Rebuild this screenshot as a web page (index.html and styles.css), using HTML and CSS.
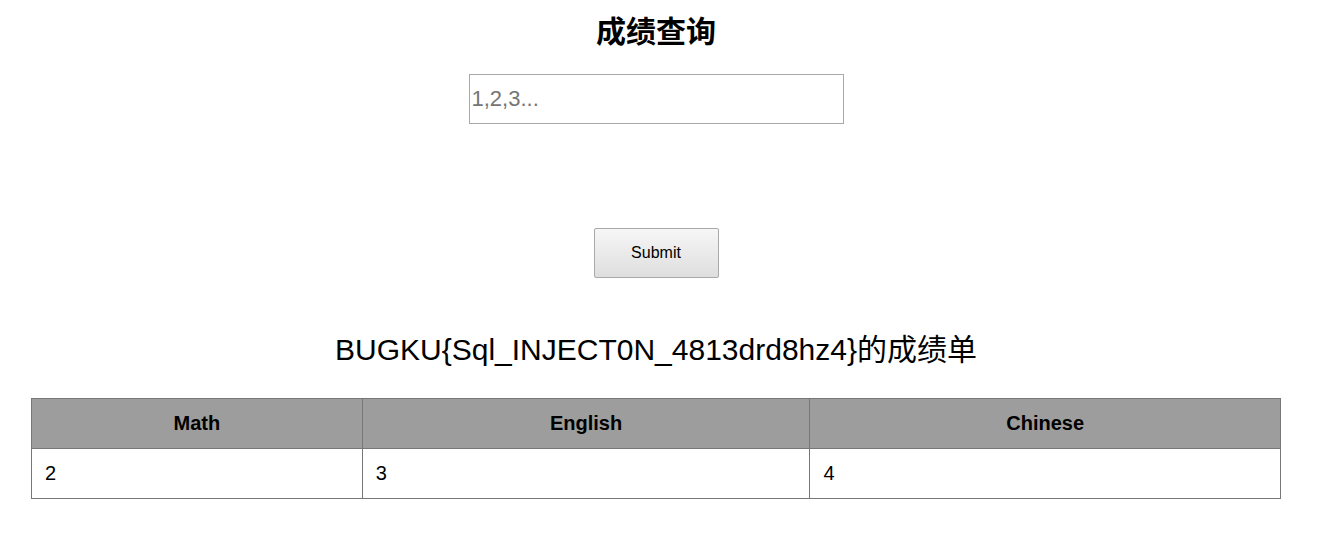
FILE: index.html
```html
<!DOCTYPE html>
<html>
<head>
<meta charset="utf-8">
<link rel="stylesheet" href="styles.css">
</head>
<body>
<div class="page">
  <h1 class="title">成绩查询</h1>
  <form class="form">
    <input class="field" type="text" placeholder="1,2,3...">
    <button class="submit" type="button">Submit</button>
  </form>
  <h2 class="sheet-title">BUGKU{Sql_INJECT0N_4813drd8hz4}的成绩单</h2>
  <table class="scores">
    <thead>
      <tr><th class="c1">Math</th><th class="c2">English</th><th class="c3">Chinese</th></tr>
    </thead>
    <tbody>
      <tr><td>2</td><td>3</td><td>4</td></tr>
    </tbody>
  </table>
</div>
</body>
</html>
```

FILE: styles.css
```css
html, body {
  margin: 0;
  padding: 0;
  background: #fff;
}
body {
  font-family: "Liberation Sans", Arial, "Noto Sans CJK SC", sans-serif;
  color: #000;
}
.page {
  width: 1312px;
  display: flex;
  flex-direction: column;
  align-items: center;
}
.title {
  margin: 14px 0 0;
  font-size: 30px;
  line-height: 36px;
  font-weight: bold;
}
.form {
  display: flex;
  flex-direction: column;
  align-items: center;
  margin-top: 24px;
}
.field {
  box-sizing: border-box;
  width: 375px;
  height: 50px;
  border: 1px solid #a9a9a9;
  padding: 0 2px;
  font-family: "Liberation Sans", Arial, sans-serif;
  font-size: 22px;
  outline: none;
}
.field::placeholder {
  color: #757575;
}
.submit {
  box-sizing: border-box;
  margin-top: 104px;
  width: 125px;
  height: 50px;
  border: 1px solid #a9a9a9;
  border-radius: 2px;
  background: linear-gradient(#f6f6f6, #dedede);
  font-family: "Liberation Sans", Arial, sans-serif;
  font-size: 16px;
  color: #000;
}
.sheet-title {
  margin: 50px 0 0;
  font-size: 30px;
  line-height: 44px;
  font-weight: normal;
}
.scores {
  margin-top: 26px;
  width: 1250px;
  border-collapse: collapse;
  font-size: 20px;
}
.scores th, .scores td {
  box-sizing: border-box;
  border: 1px solid #777;
  height: 50px;
  padding: 0 13px;
}
.scores th {
  background: #9d9d9d;
  font-weight: bold;
  text-align: center;
}
.scores td {
  text-align: left;
}
.c1 { width: 331px; }
.c2 { width: 448px; }
.c3 { width: 471px; }
```
